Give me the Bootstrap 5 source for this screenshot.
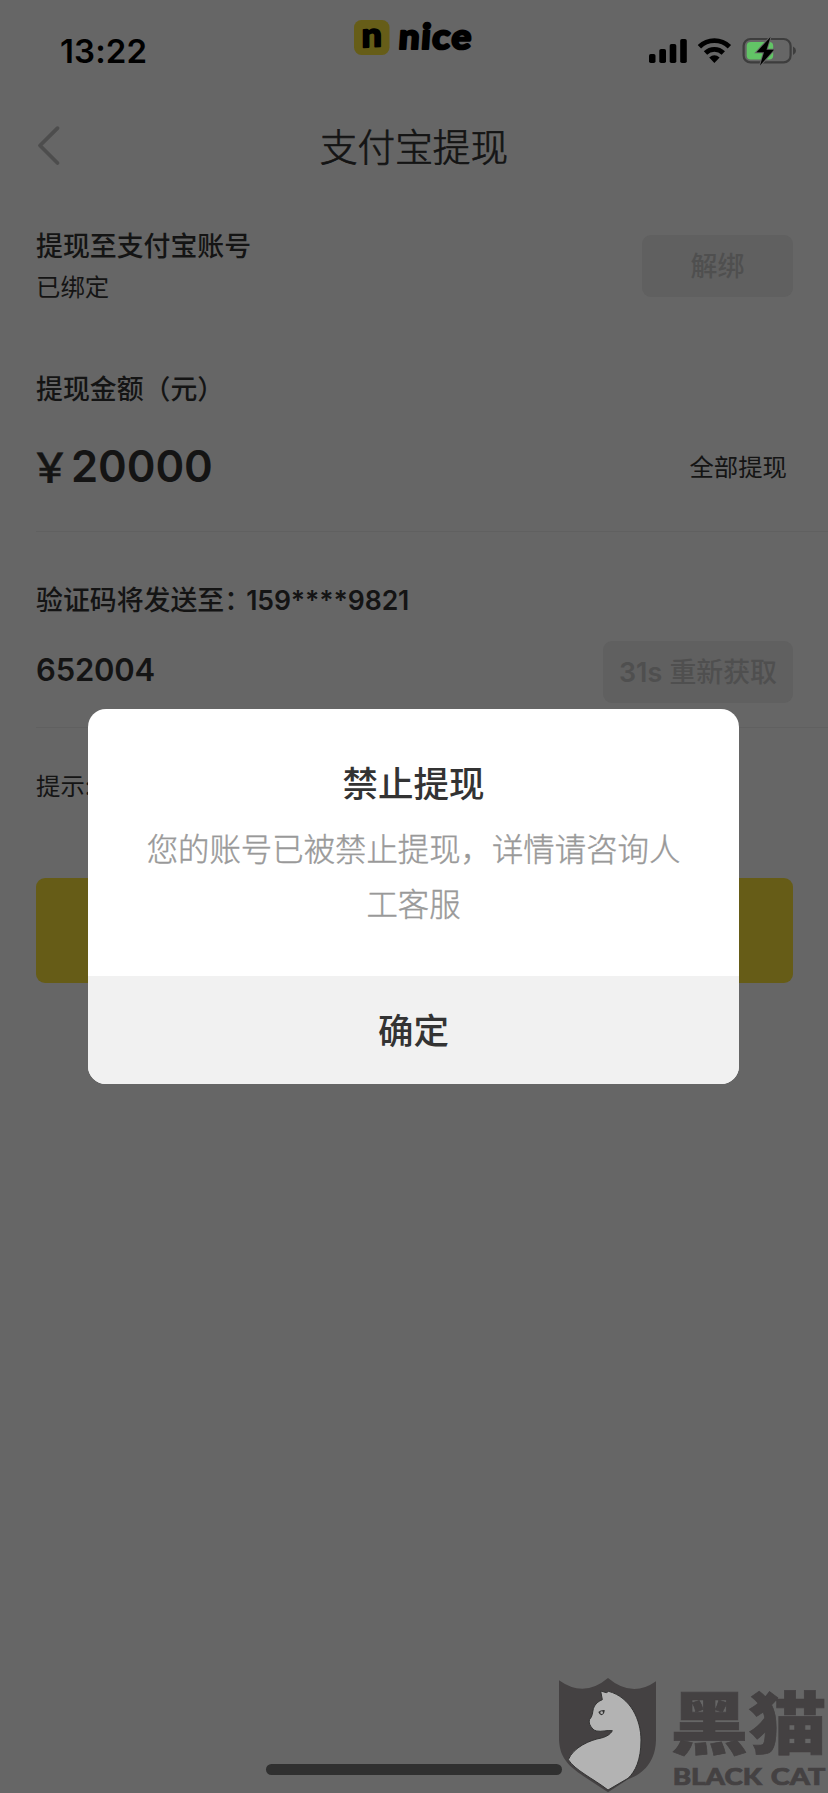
<!DOCTYPE html>
<html lang="zh-CN">
<head>
<meta charset="utf-8">
<meta name="viewport" content="width=device-width, initial-scale=1">
<title>支付宝提现</title>
<link href="https://cdn.jsdelivr.net/npm/bootstrap@5.3.0/dist/css/bootstrap.min.css" rel="stylesheet">
<style>
body{background:#666;color:#141414;font-family:Inter,"Noto Sans CJK SC",sans-serif;height:1793px;overflow:hidden}
.screen{height:1793px;overflow:hidden}
.status{height:100px;padding:0 32px 0 60px}
.clock{font-size:33px;font-weight:600;line-height:40px;color:#000;margin-top:31px;letter-spacing:.1px}
.brand-logo{left:354px;top:6px}
.navrow{height:92px;padding:0 36px}
.back{left:37px;top:25px}
.page-title{font-size:37.7px;line-height:94px;font-weight:300;-webkit-text-stroke:.7px #141414}
.body-pad{padding:0 35px 0 36px}
.lbl{font-size:26.9px;font-weight:500;line-height:36px}
.phone{font-size:26.6px;font-weight:600;letter-spacing:-.1px;margin-left:-5px}
.sub{font-size:24.4px;line-height:36px}
.btn-off,.btn-off:disabled{background:#606060;color:#4f4f4f;border:0;border-radius:9px;height:62px;font-size:26.9px;font-weight:500;padding:0;line-height:62px;opacity:1}
.yen{font-size:40px;line-height:46px;font-weight:500;font-family:"Noto Sans CJK SC",sans-serif;width:35px;margin-left:-6px;margin-right:6px;-webkit-text-stroke:.6px #141414}
.amount{font-size:43.6px;font-weight:600;line-height:50px;letter-spacing:-.1px}
.code{font-size:31px;font-weight:600;line-height:40px;letter-spacing:-.2px}
.rule{height:1px;background:#606060;margin-left:36px}
.submit{height:105px;border-radius:9px;background:#665c17;border:0}
.dialog-box{left:88px;top:709px;width:651px;height:375px;border-radius:18px;background:#fff;overflow:hidden;color:#333}
.dialog-top{height:267px;padding-top:51px}
.dialog-title{font-size:35.5px;font-weight:500;line-height:50px}
.dialog-text{font-size:31.4px;line-height:54.5px;color:#999;font-weight:300;-webkit-text-stroke:.4px #999;margin-top:13px}
.dialog-ok{height:108px;background:#f1f1f1;color:#333;font-size:35.5px;font-weight:500;border:0;border-radius:0;padding:4px 0 0}
.homebar{left:266px;top:1764px;width:296px;height:11px;border-radius:6px;background:#303030}
.blackcat{left:540px;top:1660px}
</style>
</head>
<body>
<div class="screen position-relative d-flex flex-column">
  <header class="status d-flex justify-content-between">
    <div class="clock">13:22</div>
    <svg width="150" height="30" viewBox="0 0 150 30" style="margin-top:36px">
      <g fill="#000"><rect x="3" y="18" width="6.5" height="9" rx="1.8"/><rect x="13.3" y="13" width="6.7" height="14" rx="1.8"/><rect x="23.7" y="8" width="6.6" height="19" rx="1.8"/><rect x="34.2" y="3" width="6.6" height="24" rx="1.8"/></g>
      <g fill="none" stroke="#000" stroke-width="4.8"><path d="M53.4 10.8A21.5 21.5 0 0 1 83.4 10.8"/><path d="M59.5 17A12.8 12.8 0 0 1 77.3 17"/></g>
      <path fill="#000" d="M63.2 21.4Q68.4 17.2 73.6 21.4L68.4 27Z"/>
      <rect x="97.600" y="3" width="47" height="23.400" rx="7" fill="none" stroke="#3d3d3d" stroke-width="2.2"/>
      <path fill="#3d3d3d" d="M147 10.500Q150 12 150 14.800T147 19Z"/>
      <rect x="100.700" y="6" width="26.500" height="17.400" rx="4" fill="#62c466"/>
      <path d="M124.500 1L110.500 16.300H118L114 29.500L128 13.800H120.500Z" fill="#000" stroke="#666" stroke-width="2" paint-order="stroke"/>
    </svg>
  </header>
  <svg class="brand-logo position-absolute" width="126" height="62" viewBox="0 -10 126 62">
    <rect x="0" y="4" width="35.500" height="35" rx="7.500" fill="#665d18"/>
    <g font-family="Lato, sans-serif" font-weight="900" stroke="#000" stroke-linejoin="round">
      <text transform="translate(7.500 31.500) rotate(-3) skewX(-3)" font-size="34" textLength="20.500" lengthAdjust="spacingAndGlyphs" stroke-width="1.600">n</text>
      <text transform="translate(44 33) skewX(-4)" font-size="35" letter-spacing="1.400" textLength="74" lengthAdjust="spacingAndGlyphs" stroke-width="2.200">nice</text>
    </g>
  </svg>
  <nav class="navrow position-relative text-center">
    <svg class="back position-absolute" width="25" height="42" viewBox="0 0 25 42"><path d="M20.500 3.200L3 20.500L20.500 38" fill="none" stroke="#4d4d4d" stroke-width="3.800" stroke-linecap="round" stroke-linejoin="round"/></svg>
    <div class="page-title">支付宝提现</div>
  </nav>
  <main>
    <section class="body-pad d-flex justify-content-between" style="padding-top:36px">
      <div><div class="lbl">提现至支付宝账号</div><div class="sub" style="margin-top:5px">已绑定</div></div>
      <button class="btn btn-off" style="width:151px;margin-top:7px" disabled>解绑</button>
    </section>
    <section class="body-pad" style="margin-top:66px">
      <div class="lbl">提现金额（元）</div>
      <div class="d-flex justify-content-between align-items-center" style="margin-top:35px">
        <div class="d-flex"><span class="yen">￥</span><span class="amount">20000</span></div>
        <span class="sub" style="padding-right:6px">全部提现</span>
      </div>
    </section>
    <div class="rule" style="margin-top:39px"></div>
    <section class="body-pad" style="margin-top:50px">
      <div class="lbl">验证码将发送至：<span class="phone">159****9821</span></div>
      <div class="d-flex justify-content-between" style="margin-top:23px">
        <span class="code" style="margin-top:9px">652004</span>
        <button class="btn btn-off" style="width:190px" disabled><span style="font-weight:600">31s</span> 重新获取</button>
      </div>
    </section>
    <div class="rule" style="margin-top:24px"></div>
    <section class="body-pad">
      <div class="sub" style="margin-top:40px">提示:</div>
      <button class="btn submit w-100 d-block" style="margin-top:74px" aria-label="提现"></button>
    </section>
  </main>

  <div class="dialog-box position-absolute text-center" role="dialog">
    <div class="dialog-top">
      <div class="dialog-title">禁止提现</div>
      <div class="dialog-text">您的账号已被禁止提现，详情请咨询人<br>工客服</div>
    </div>
    <button class="btn dialog-ok w-100 d-block">确定</button>
  </div>

  <div class="homebar position-absolute"></div>
  <svg class="blackcat position-absolute" width="288" height="133" viewBox="0 0 864 399">
    <path fill="#444142" d="M57 61Q132 115 204 54Q277 115 348 64V240C346 318 296 346 264 358L204 397L140 355C92 322 60 300 57 240Z"/>
    <path fill="#b3b3b3" stroke="#333" stroke-width="3" d="M182 93L199 98L206 94C272 112 303 180 303 240C303 300 286 335 264 355L204 390C160 356 104 330 85 299C100 262 150 240 184 234C200 230 212 222 217 212C200 210 184 216 170 213C160 211 157 205 153 200C148 193 146 185 149 178C158 168 157 160 160 146C166 130 176 124 187 119Z"/>
    <path fill="#333" d="M175 156Q182 149 194 150Q194 163 184 166Q178 164 175 156Z"/>
    <circle cx="185" cy="158" r="4" fill="#b3b3b3"/>
    <g fill="#444142" stroke="#444142">
      <text transform="translate(391 267) scale(1.150 1)" font-family="Noto Sans CJK SC, sans-serif" font-weight="900" font-size="204" stroke-width="2">黑猫</text>
      <text x="398" y="376" font-family="Lato, sans-serif" font-weight="900" font-size="66" textLength="268" lengthAdjust="spacingAndGlyphs" stroke-width="2">BLACK</text>
      <text x="692" y="376" font-family="Lato, sans-serif" font-weight="900" font-size="66" textLength="164" lengthAdjust="spacingAndGlyphs" stroke-width="2">CAT</text>
    </g>
  </svg>
</div>
<script src="https://cdn.jsdelivr.net/npm/bootstrap@5.3.0/dist/js/bootstrap.bundle.min.js"></script>
</body>
</html>
